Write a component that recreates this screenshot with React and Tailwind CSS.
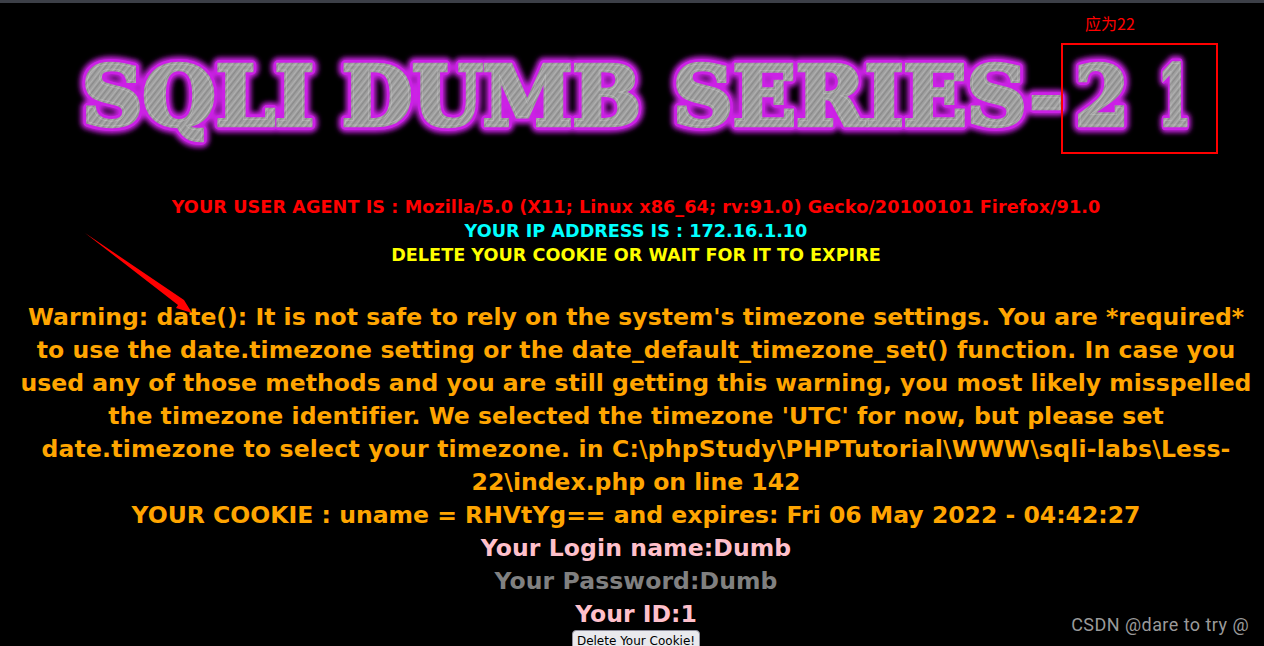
import React from 'react';

const titleParts = [
  { text: 'SQLI', x: 82, width: 232 },
  { text: 'DUMB', x: 342, width: 299 },
  { text: 'SERIES-', x: 673, width: 391 },
  { text: '2', x: 1075, width: 54 },
  { text: '1', x: 1158, width: 33 },
];

const TitleLayer = (props) => (
  <g {...props}>
    {titleParts.map((part) => (
      <text
        key={part.text}
        x={part.x}
        y="122"
        textLength={part.width}
        lengthAdjust="spacingAndGlyphs"
        fontFamily="'DejaVu Serif', serif"
        fontWeight="700"
        fontSize="82"
      >
        {part.text}
      </text>
    ))}
  </g>
);

const Title = () => (
  <svg width="1264" height="192" viewBox="0 0 1264 192" className="block">
    <defs>
      <pattern id="metal" width="5" height="5" patternUnits="userSpaceOnUse" patternTransform="rotate(-52)">
        <rect width="5" height="5" fill="#9c9c9c" />
        <rect width="5" height="1" fill="#b0b0b0" />
        <rect y="2" width="5" height="1" fill="#8a8a8a" />
        <rect y="4" width="5" height="0.5" fill="#a9a9a9" />
      </pattern>
      <filter id="glow" x="-20%" y="-30%" width="140%" height="160%">
        <feGaussianBlur stdDeviation="2.5" />
      </filter>
    </defs>
    <TitleLayer fill="#cc20e6" stroke="#cc20e6" strokeWidth="15" strokeLinejoin="round" filter="url(#glow)" />
    <TitleLayer fill="#cc20e6" stroke="#cc20e6" strokeWidth="10" strokeLinejoin="round" />
    <TitleLayer fill="url(#metal)" stroke="url(#metal)" strokeWidth="4.5" strokeLinejoin="miter" />
    <TitleLayer fill="none" stroke="#ffffff" strokeWidth="0.5" strokeOpacity="0.3" />
  </svg>
);

const Arrow = () => (
  <svg width="120" height="90" viewBox="0 0 120 90" className="absolute left-[80px] top-[230px]">
    <polygon points="5,3 104,70 112,83 96,78 98,75" fill="#ff0000" />
  </svg>
);

const App = () => {
  return (
    <div className="relative h-[646px] w-[1264px] overflow-hidden bg-black font-['DejaVu_Sans',sans-serif] font-bold">
      <div className="h-[3px] bg-[#3c3f47]" />
      <Title />

      <div className="pl-[16px] pr-[8px] text-center">
        <div className="text-[17.64px] leading-[24px]">
          <div className="tracking-[0.07px] text-[#ff0000]">
            YOUR USER AGENT IS : Mozilla/5.0 (X11; Linux x86_64; rv:91.0) Gecko/20100101 Firefox/91.0
          </div>
          <div className="text-[#00ffff]">YOUR IP ADDRESS IS : 172.16.1.10</div>
          <div className="text-[#ffff00]">DELETE YOUR COOKIE OR WAIT FOR IT TO EXPIRE</div>
        </div>

        <div className="mt-[34px] text-[23.52px] leading-[33px]">
          <div className="text-[#ffa500]">
            <div>Warning: date(): It is not safe to rely on the system's timezone settings. You are *required*</div>
            <div className="tracking-[0.07px]">
              to use the date.timezone setting or the date_default_timezone_set() function. In case you
            </div>
            <div>used any of those methods and you are still getting this warning, you most likely misspelled</div>
            <div className="tracking-[0.05px]">
              the timezone identifier. We selected the timezone 'UTC' for now, but please set
            </div>
            <div className="tracking-[0.19px]">
              date.timezone to select your timezone. in C:\phpStudy\PHPTutorial\WWW\sqli-labs\Less-
            </div>
            <div>22\index.php on line 142</div>
          </div>
          <div className="text-[#ffa500]">YOUR COOKIE : uname = RHVtYg== and expires: Fri 06 May 2022 - 04:42:27</div>
          <div className="tracking-[0.1px] text-[#ffc0cb]">Your Login name:Dumb</div>
          <div className="tracking-[0.1px] text-[#808080]">Your Password:Dumb</div>
          <div className="text-[#ffc0cb]">Your ID:1</div>
        </div>

        <button className="mx-auto -mt-px block rounded-[4px] border border-[#8f8f9d] bg-[#e9e9ed] px-[4px] py-[1px] text-[12px] font-normal text-black">
          Delete Your Cookie!
        </button>
      </div>

      <div className="absolute left-[1061px] top-[43px] h-[111px] w-[157px] border-2 border-[#ff0000]" />
      <div className="absolute left-[1085px] top-[13px] font-['Noto_Sans_CJK_SC',sans-serif] text-[16px] font-normal leading-[20px] text-[#ff0000]">
        应为22
      </div>
      <Arrow />
      <div className="absolute right-[15px] top-[613px] font-['Roboto',sans-serif] text-[18px] font-normal leading-[24px] tracking-[0.45px] text-[#9a9a9a]">
        CSDN @dare to try @
      </div>
    </div>
  );
};

export default App;
